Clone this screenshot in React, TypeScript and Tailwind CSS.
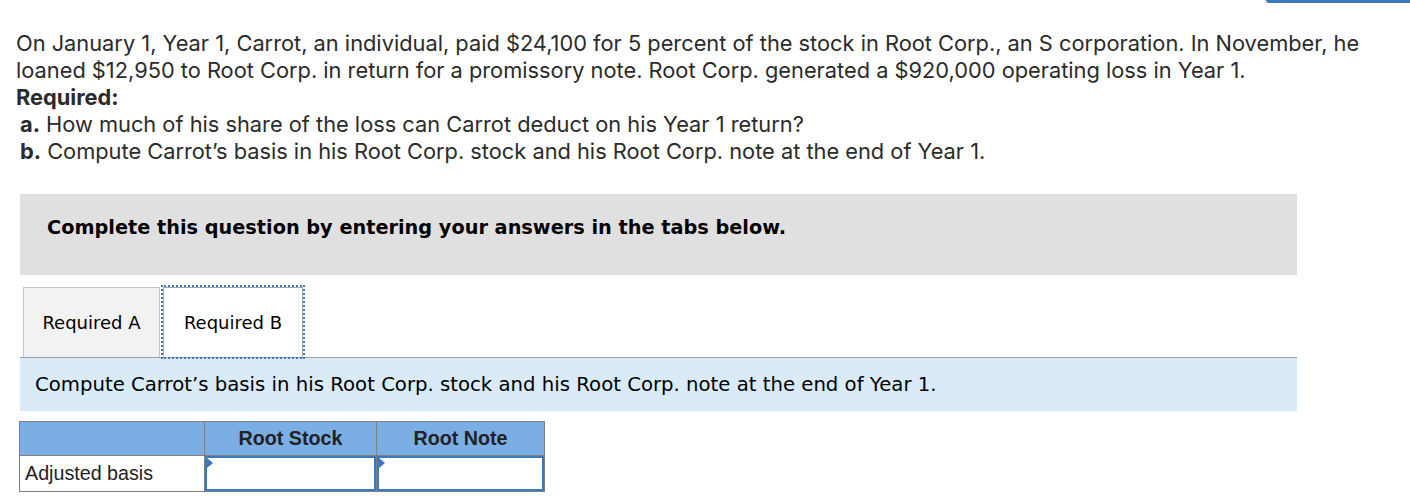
import React from "react";

export default function App() {
  return (
    <div className="relative w-[1410px] h-[502px] bg-white overflow-hidden">
      <div className="absolute right-0 top-0 w-[144px] h-[3px] bg-[#3a78c0] rounded-bl-[4px]" />
      <div className="pt-[30px] pl-[16px] pr-[26px] text-[21.8px] leading-[27px] text-[#2b2b2b] font-['Inter',sans-serif]">
        <p>
          On January 1, Year 1, Carrot, an individual, paid $24,100 for 5 percent of the stock in Root Corp., an S corporation. In November, he loaned $12,950 to Root Corp. in return for a promissory note. Root Corp. generated a $920,000 operating loss in Year 1.
        </p>
        <p className="font-bold">Required:</p>
        <p className="pl-[4px]"><span className="font-bold">a.</span> How much of his share of the loss can Carrot deduct on his Year 1 return?</p>
        <p className="pl-[4px]"><span className="font-bold">b.</span> Compute Carrot’s basis in his Root Corp. stock and his Root Corp. note at the end of Year 1.</p>
      </div>
      <div className="mt-[29px] ml-[20px] w-[1277px]">
        <div className="h-[81px] bg-[#e0e0e0] pt-[22px] pl-[27px] leading-[24px] font-['DejaVu_Sans',Verdana,sans-serif] font-bold text-[19.3px] text-black">
          Complete this question by entering your answers in the tabs below.
        </div>
        <div className="mt-[12px] flex items-end h-[70px] pl-[3px] gap-[3px]">
          <div className="h-[70px] w-[137px] bg-[#f2f2f2] border border-[#c4c4c4] border-b-0 flex items-center justify-center font-['DejaVu_Sans',Verdana,sans-serif] text-[18px] text-black">
            Required A
          </div>
          <div className="h-[70px] w-[140px] bg-white border border-[#a8a8a8] border-b-0 outline-2 outline-dotted outline-[#3a78c0] flex items-center justify-center font-['DejaVu_Sans',Verdana,sans-serif] text-[18px] text-black">
            Required B
          </div>
        </div>
        <div className="border-t border-[#a0a0a0] h-[54px] bg-[#d9ebf9] flex items-center pl-[15px] font-['DejaVu_Sans',Verdana,sans-serif] text-[19.7px] text-black">
          Compute Carrot’s basis in his Root Corp. stock and his Root Corp. note at the end of Year 1.
        </div>
      </div>
      <table className="mt-[10px] ml-[19px] border-collapse font-['Liberation_Sans',Arial,sans-serif] text-[19.7px] text-[#222]">
        <tbody>
          <tr className="h-[34px] bg-[#7aaee5]">
            <th className="w-[185px] border border-[#808080]"></th>
            <th className="w-[172px] border border-[#808080] font-bold text-center">Root Stock</th>
            <th className="w-[168px] border border-[#808080] font-bold text-center">Root Note</th>
          </tr>
          <tr className="h-[36px]">
            <td className="border border-[#808080] pl-[5px] text-left">Adjusted basis</td>
            <td className="border border-[#808080] p-0">
              <div className="relative h-[35px] border-2 border-[#3a78c0]">
                <div className="absolute left-0 top-0 w-0 h-0 border-t-[5px] border-b-[5px] border-l-[6px] border-t-transparent border-b-transparent border-l-[#3a78c0]" />
              </div>
            </td>
            <td className="border border-[#808080] p-0">
              <div className="relative h-[35px] border-2 border-[#3a78c0]">
                <div className="absolute left-0 top-0 w-0 h-0 border-t-[5px] border-b-[5px] border-l-[6px] border-t-transparent border-b-transparent border-l-[#3a78c0]" />
              </div>
            </td>
          </tr>
        </tbody>
      </table>
    </div>
  );
}
